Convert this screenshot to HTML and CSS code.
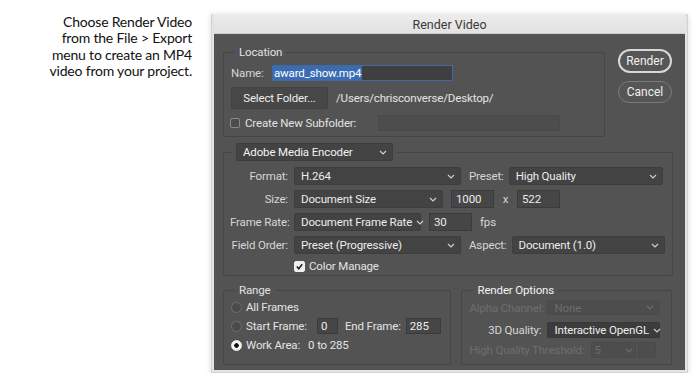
FILE: index.html
```html
<!DOCTYPE html>
<html lang="en">
<head>
    <meta charset="UTF-8">
    <meta name="viewport" content="width=device-width, initial-scale=1.0">
    <title>Render Video</title>
    <link rel="stylesheet" href="styles.css">
</head>
<body>
<div class="page">
    <p class="caption">Choose Render Video<br>from the File &gt; Export<br>menu to create an MP4<br>video from your project.</p>

    <div class="window">
        <div class="titlebar">Render Video</div>
        <div class="dialog">

            <!-- Location + buttons -->
            <div class="top">
                <fieldset class="group location">
                    <legend class="title">Location</legend>
                    <div class="row name-row">
                        <span class="lbl-inline">Name:</span>
                        <div class="field focus"><span class="sel">award_show.mp4</span></div>
                    </div>
                    <div class="row folder-row">
                        <button class="btn">Select Folder...</button>
                        <span class="path">/Users/chrisconverse/Desktop/</span>
                    </div>
                    <div class="row sub-row">
                        <span class="check"></span>
                        <span class="check-text">Create New Subfolder:</span>
                        <div class="field off sub-field"></div>
                    </div>
                </fieldset>

                <div class="actions">
                    <button class="pill default">Render</button>
                    <button class="pill">Cancel</button>
                </div>
            </div>

            <!-- Encoder settings -->
            <fieldset class="group encoder">
                <legend class="legend-select">
                    <div class="select encoder-select">Adobe Media Encoder <svg class="chev" viewBox="0 0 8 5"><polyline points="1,1 4,4 7,1"/></svg></div>
                </legend>
                <div class="row form-row">
                    <span class="lbl">Format:</span>
                    <div class="select w167">H.264 <svg class="chev" viewBox="0 0 8 5"><polyline points="1,1 4,4 7,1"/></svg></div>
                    <span class="lbl-inline sp8">Preset:</span>
                    <div class="select w154">High Quality <svg class="chev" viewBox="0 0 8 5"><polyline points="1,1 4,4 7,1"/></svg></div>
                </div>
                <div class="row form-row">
                    <span class="lbl">Size:</span>
                    <div class="select w149">Document Size <svg class="chev" viewBox="0 0 8 5"><polyline points="1,1 4,4 7,1"/></svg></div>
                    <div class="field num sp8">1000</div>
                    <span class="times">x</span>
                    <div class="field num">522</div>
                </div>
                <div class="row form-row">
                    <span class="lbl">Frame Rate:</span>
                    <div class="select w127">Document Frame Rate <svg class="chev" viewBox="0 0 8 5"><polyline points="1,1 4,4 7,1"/></svg></div>
                    <div class="field num sp8">30</div>
                    <span class="unit">fps</span>
                </div>
                <div class="row form-row">
                    <span class="lbl">Field Order:</span>
                    <div class="select w167">Preset (Progressive) <svg class="chev" viewBox="0 0 8 5"><polyline points="1,1 4,4 7,1"/></svg></div>
                    <span class="lbl-inline sp8">Aspect:</span>
                    <div class="select w153">Document (1.0) <svg class="chev" viewBox="0 0 8 5"><polyline points="1,1 4,4 7,1"/></svg></div>
                </div>
                <div class="row check-row">
                    <span class="check on"><svg viewBox="0 0 10 10"><polyline points="2,5 4.2,7.4 8,2.6"/></svg></span>
                    <span class="check-text">Color Manage</span>
                </div>
            </fieldset>

            <!-- Range + render options -->
            <div class="bottom">
                <fieldset class="group range">
                    <legend class="title">Range</legend>
                    <div class="row radio-row">
                        <span class="radio"></span>
                        <span>All Frames</span>
                    </div>
                    <div class="row radio-row tall">
                        <span class="radio"></span>
                        <span>Start Frame:</span>
                        <div class="field start">0</div>
                        <span class="end-lbl">End Frame:</span>
                        <div class="field end">285</div>
                    </div>
                    <div class="row radio-row">
                        <span class="radio on"></span>
                        <span>Work Area:</span>
                        <span class="span-val">0 to 285</span>
                    </div>
                </fieldset>

                <fieldset class="group options">
                    <legend class="title bright">Render Options</legend>
                    <div class="row opt-row">
                        <span class="lbl opt-lbl off-text">Alpha Channel:</span>
                        <div class="select w113 disabled">None <svg class="chev" viewBox="0 0 8 5"><polyline points="1,1 4,4 7,1"/></svg></div>
                    </div>
                    <div class="row opt-row tall">
                        <span class="lbl opt-lbl">3D Quality:</span>
                        <div class="select w113 dark">Interactive OpenGL <svg class="chev" viewBox="0 0 8 5"><polyline points="1,1 4,4 7,1"/></svg></div>
                    </div>
                    <div class="row opt-row">
                        <span class="off-text">High Quality Threshold:</span>
                        <div class="field off thresh">5</div>
                        <div class="field off step"><svg class="chev" viewBox="0 0 8 5"><polyline points="1,1 4,4 7,1"/></svg></div>
                        <div class="field off blank"></div>
                    </div>
                </fieldset>
            </div>

        </div>
    </div>
</div>
</body>
</html>
```

FILE: styles.css
```css
/* General */
* {
    margin: 0;
    padding: 0;
    box-sizing: border-box;
}

body {
    background: #fff;
    font-family: Roboto, "Liberation Sans", Arial, sans-serif;
    font-size: 11.5px;
    letter-spacing: -0.15px;
    color: #e4e4e4;
}

.page {
    display: flex;
    align-items: flex-start;
    padding-top: 14px;
}

/* Caption on the left */
.caption {
    width: 192px;
    text-align: right;
    font-family: Lato, "Open Sans", sans-serif;
    font-size: 14px;
    letter-spacing: -0.2px;
    line-height: 16.4px;
    color: #111;
    margin-right: 19px;
}

/* Window frame */
.window {
    width: 477px;
    background: #e4e4e4;
    padding: 0 2px 2px;
    border: 1px solid #d2d2d2;
    border-top: none;
    box-shadow: 0 1px 6px rgba(0, 0, 0, 0.15);
}

.titlebar {
    height: 20px;
    line-height: 22px;
    text-align: center;
    color: #3a3a3a;
    font-size: 12.5px;
    letter-spacing: 0;
    background: linear-gradient(#ececec, #e2e2e2);
    border-bottom: 1px solid #cfcfcf;
}

.dialog {
    background: #535353;
    padding: 11px 13px 5px 9px;
}

/* Group boxes */
.group {
    border: 1px solid #464646;
    border-radius: 2px;
    min-width: 0;
    padding: 0 7px 6px;
}

.title {
    margin-left: 4px;
    padding: 0 4px;
    line-height: 14px;
    color: #e2e2e2;
}

.title.bright {
    color: #f2f2f2;
}

.row {
    display: flex;
    align-items: center;
}

.row > * {
    flex: none;
    white-space: nowrap;
}

/* Top section */
.top {
    display: flex;
    align-items: flex-start;
}

.location {
    width: 383px;
    padding-bottom: 5px;
}

.name-row {
    height: 16px;
    margin-top: 6px;
}

.lbl-inline {
    color: #d6d6d6;
    margin-right: 6px;
}

.name-row .lbl-inline {
    width: 41px;
    margin-right: 0;
}

.field {
    height: 16px;
    line-height: 14px;
    background: #464646;
    border: 1px solid #3b3b3b;
    padding: 0 3px;
    color: #ececec;
}

.field.focus {
    width: 181px;
    padding: 0;
    background: #3f3f3f;
    border-color: #3d6aa6;
}

.sel {
    display: inline-block;
    background: #3b6cb2;
    color: #fff;
    padding: 0 1px;
    line-height: 14px;
}

.folder-row {
    margin-top: 6px;
    height: 22px;
}

.btn {
    width: 97px;
    height: 22px;
    background: #474747;
    border: 1px solid #424242;
    border-radius: 2px;
    color: #ececec;
    font: inherit;
    letter-spacing: inherit;
}

.path {
    margin-left: 8px;
}

.sub-row {
    margin-top: 6px;
    height: 16px;
}

.check {
    width: 10px;
    height: 10px;
    border: 1px solid #8a8a8a;
    border-radius: 2px;
    background: #4c4c4c;
    margin-left: -1px;
    margin-right: 5px;
    display: flex;
}

.check.on {
    width: 11px;
    height: 11px;
    background: #efefef;
    border-color: #efefef;
    margin-left: 0;
    margin-right: 4px;
}

.check svg {
    width: 100%;
    height: 100%;
    fill: none;
    stroke: #222;
    stroke-width: 1.8;
}

.check-text {
    color: #e2e2e2;
}

.sub-field {
    width: 182px;
    margin-left: 22px;
}

.field.off {
    background: #4d4d4d;
    border-color: #4a4a4a;
    color: #6c6c6c;
}

.actions {
    display: flex;
    flex-direction: column;
    gap: 8px;
    margin-left: 13px;
    margin-top: 4px;
}

.pill {
    width: 54px;
    height: 22px;
    border-radius: 12px;
    background: #565656;
    border: 1px solid #7a7a7a;
    color: #f0f0f0;
    font: inherit;
    font-size: 12px;
    letter-spacing: 0;
}

.pill.default {
    height: 24px;
    border: 2px solid #d8d8d8;
}

/* Encoder section */
.encoder {
    margin-top: 6px;
    width: 450px;
    padding: 0 6px 2px;
}

.legend-select {
    margin-left: 2px;
    padding: 0 4px;
}

.select {
    height: 18px;
    display: flex;
    align-items: center;
    justify-content: space-between;
    padding: 0 5px 0 6px;
    background: #434343;
    border: 1px solid #3d3d3d;
    border-radius: 2px;
    color: #ececec;
    white-space: nowrap;
}

.encoder-select {
    width: 157px;
    color: #f2f2f2;
}

.chev {
    width: 8px;
    height: 5px;
    flex: none;
    fill: none;
    stroke: #cfcfcf;
    stroke-width: 1.2;
    margin-left: 4px;
}

.form-row {
    height: 18px;
    margin-top: 5px;
}

.form-row:first-of-type {
    margin-top: 6px;
}

.lbl {
    width: 58px;
    text-align: right;
    color: #d6d6d6;
    margin-right: 6px;
}

.sp8 {
    margin-left: 8px;
}

.w167 { width: 167px; }
.w154 { width: 154px; }
.w153 { width: 153px; }
.w149 { width: 149px; }
.w127 { width: 127px; }
.w113 { width: 113px; }

.lbl-inline.sp8 {
    margin-right: 5px;
}

.field.num {
    width: 43px;
    height: 18px;
    line-height: 16px;
    padding: 0 4px;
}

.times {
    width: 23px;
    text-align: center;
    color: #d6d6d6;
}

.unit {
    margin-left: 8px;
    color: #d6d6d6;
}

.check-row {
    height: 14px;
    margin-top: 5px;
    padding-left: 64px;
}

/* Bottom section */
.bottom {
    display: flex;
    gap: 10px;
    margin-top: 7px;
}

.range {
    width: 229px;
    padding-bottom: 7px;
}

.radio-row {
    height: 14px;
    margin-top: 3px;
}

.radio-row.tall {
    height: 16px;
    margin-top: 4px;
}

.radio-row:last-child {
    margin-top: 4px;
}

.radio {
    width: 11px;
    height: 11px;
    border-radius: 50%;
    border: 1px solid #707070;
    background: #4a4a4a;
    margin-right: 4px;
}

.radio.on {
    background: radial-gradient(circle, #111 0 2px, #f2f2f2 2.5px);
    border-color: #f2f2f2;
}

.field.start {
    width: 21px;
    margin-left: 10px;
}

.end-lbl {
    margin-left: 7px;
}

.field.end {
    width: 35px;
    margin-left: 5px;
}

.span-val {
    margin-left: 8px;
}

.options {
    width: 211px;
    padding-bottom: 6px;
}

.opt-row {
    height: 15px;
    margin-top: 3px;
}

.opt-row.tall {
    height: 16px;
    margin-top: 7px;
}

.opt-row:last-child {
    margin-top: 4px;
    height: 16px;
}

.opt-lbl {
    width: 72px;
}

.off-text {
    color: #6e6e6e;
}

.select.disabled {
    height: 15px;
    background: #4d4d4d;
    border-color: #4b4b4b;
    color: #6c6c6c;
}

.select.disabled .chev,
.field.off .chev {
    stroke: #6c6c6c;
}

.select.dark {
    height: 16px;
    background: #3c3c3c;
    border-color: #383838;
}

.field.thresh {
    width: 30px;
    margin-left: 6px;
}

.field.step {
    width: 14px;
    margin-left: 1px;
    padding: 0 2px;
    display: flex;
    align-items: center;
}

.field.step .chev {
    margin-left: 0;
}

.field.blank {
    width: 18px;
    margin-left: 2px;
}
```
